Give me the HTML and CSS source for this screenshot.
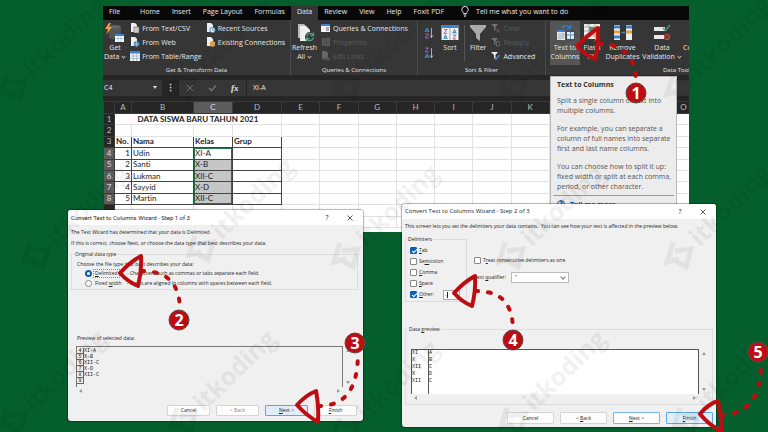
FILE: index.html
```html
<!DOCTYPE html>
<html lang="id">
<head>
    <meta charset="UTF-8">
    <meta name="viewport" content="width=device-width, initial-scale=1.0">
    <title>Text to Columns - itkoding</title>
    <link rel="stylesheet" href="styles.css">
</head>
<body>
<main class="poster">

    <!-- Excel window -->
    <section class="excel">
        <nav class="tabs">
            <a href="#" class="file">File</a>
            <a href="#">Home</a>
            <a href="#">Insert</a>
            <a href="#">Page Layout</a>
            <a href="#">Formulas</a>
            <a href="#" class="active">Data</a>
            <a href="#">Review</a>
            <a href="#">View</a>
            <a href="#">Help</a>
            <a href="#">Foxit PDF</a>
            <a href="#" class="tell"><svg width="8" height="11" viewBox="0 0 8 11"><path d="M2.5 7.5C2.5 6 .8 5.300.8 3.600A3.200 3.200 0 0 1 7.200 3.600C7.200 5.300 5.500 6 5.500 7.500ZM2.700 9H5.300M3.200 10.300H4.800" fill="none" stroke="#ddd"/></svg>Tell me what you want to do</a>
        </nav>

        <div class="ribbon">
            <div class="group get">
                <div class="tools">
                    <button class="big">
                        <svg width="20" height="20" viewBox="0 0 20 20"><ellipse cx="10" cy="4" rx="6" ry="2" fill="#666"/><path d="M4 4V15Q10 18 16 15V4Q10 7 4 4Z" fill="#555"/><path d="M4 0L0 6H3L1 12L7 4H4L6 0Z" fill="#e8a33d"/><rect x="10" y="11" width="9" height="8" fill="#fff"/><rect x="10" y="11" width="9" height="2" fill="#3b83d1"/><path d="M10 15.500H19M13 13V19M16 13V19" stroke="#7aaadd" stroke-width=".6"/></svg>
                        <span>Get<br>Data <i class="caret"></i></span>
                    </button>
                    <div class="list">
                        <button><svg width="10" height="10" viewBox="0 0 10 10"><path d="M1 0H5L7 2V9H1Z" fill="#eee"/><rect x="4" y="4" width="5" height="6" fill="#ccc" stroke="#666" stroke-width=".6"/></svg>From Text/CSV</button>
                        <button><svg width="10" height="10" viewBox="0 0 10 10"><path d="M1 0H5L7 2V9H1Z" fill="#eee"/><circle cx="6.500" cy="7" r="2.800" fill="#3b83c0"/><path d="M4 7H9M6.500 4.500V9.500" stroke="#cde" stroke-width=".6"/></svg>From Web</button>
                        <button><svg width="10" height="10" viewBox="0 0 10 10"><rect width="10" height="10" fill="#f2f2f2"/><rect width="10" height="2.500" fill="#3b83d1"/><path d="M0 5H10M0 7.500H10M3.300 2V10M6.600 2V10" stroke="#8ab" stroke-width=".6"/></svg>From Table/Range</button>
                    </div>
                    <div class="list">
                        <button><svg width="10" height="10" viewBox="0 0 10 10"><path d="M1 0H5L7 2V9H1Z" fill="#eee"/><circle cx="6.500" cy="7" r="2.600" fill="#fff" stroke="#3b83c0"/><path d="M6.500 5.500V7H8" stroke="#345" stroke-width=".6" fill="none"/></svg>Recent Sources</button>
                        <button><svg width="10" height="10" viewBox="0 0 10 10"><path d="M1 0H5L7 2V9H1Z" fill="#eee"/><path d="M4 5Q6.500 3.500 9 5V9Q6.500 10.500 4 9Z" fill="#d8a04a"/></svg>Existing Connections</button>
                    </div>
                </div>
                <div class="caption">Get &amp; Transform Data</div>
            </div>

            <div class="group queries">
                <div class="tools">
                    <button class="big">
                        <svg width="20" height="20" viewBox="0 0 20 20"><path d="M3 1H9L12 4V15H3Z" fill="#bbb"/><path d="M5 3H11L15 7V18H5Z" fill="#f0f0f0"/><circle cx="15" cy="14" r="5" fill="#363636"/><path d="M11.500 13.500A3.600 3.600 0 0 1 18 12M18.500 14.500A3.600 3.600 0 0 1 12 16M18.500 9.500V12.500H15.500M11.500 18.500V15.500H14.500" fill="none" stroke="#4fa583" stroke-width="1.300"/></svg>
                        <span>Refresh<br>All <i class="caret"></i></span>
                    </button>
                    <div class="list">
                        <button><svg width="10" height="10" viewBox="0 0 10 10"><rect y="1" width="9" height="8" fill="#f2f2f2"/><rect y="1" width="9" height="2" fill="#3b83d1"/><rect x="5" y="4" width="3" height="4" fill="#aab"/></svg>Queries &amp; Connections</button>
                        <button disabled><svg width="10" height="10" viewBox="0 0 10 10"><rect x="1" y="1" width="8" height="8" fill="#777"/><path d="M3 1V9M4 3H8M4 5H8M4 7H8" stroke="#444" stroke-width=".7"/></svg>Properties</button>
                        <button disabled><svg width="10" height="10" viewBox="0 0 10 10"><path d="M1 0H5L7 2V8H1Z" fill="#888"/><path d="M2 8H9" stroke="#666" stroke-width="2.500"/></svg>Edit Links</button>
                    </div>
                </div>
                <div class="caption">Queries &amp; Connections</div>
            </div>

            <div class="group sort">
                <div class="tools">
                    <div class="orders">
                        <button aria-label="Sort A to Z"><svg width="10" height="12" viewBox="0 0 10 12"><path d="M1 5L3 1L5 5M1.700 4H4.300" fill="none" stroke="#4b94d8"/><path d="M1.200 7H4.500L1.200 11H4.800" fill="none" stroke="#9a62b8"/><path d="M7.500 1V10.500M5.800 8.500L7.500 10.500L9.200 8.500" fill="none" stroke="#ccc" stroke-width=".8"/></svg></button>
                        <button aria-label="Sort Z to A"><svg width="10" height="12" viewBox="0 0 10 12"><path d="M1 11L3 7L5 11M1.700 10H4.300" fill="none" stroke="#4b94d8"/><path d="M1.200 1H4.500L1.200 5H4.800" fill="none" stroke="#9a62b8"/><path d="M7.500 1V10.500M5.800 8.500L7.500 10.500L9.200 8.500" fill="none" stroke="#ccc" stroke-width=".8"/></svg></button>
                    </div>
                    <button class="big">
                        <svg width="18" height="20" viewBox="0 0 18 20"><rect x=".5" y="2" width="17" height="15" fill="#f0f0f0"/><rect x=".5" y="2" width="17" height="3" fill="#3b83d1"/><path d="M9 5V17" stroke="#888" stroke-width=".7"/><path d="M3 6.500H6L3 10.500H6M12 12H15L12 16H15" fill="none" stroke="#9a62b8"/><path d="M2.800 16L4.500 12L6.200 16M3.300 15H5.700M11.800 10.500L13.500 6.500L15.200 10.500M12.300 9.500H14.700" fill="none" stroke="#2f7cc4"/></svg>
                        <span>Sort</span>
                    </button>
                    <span class="rule"></span>
                    <button class="big">
                        <svg width="16" height="20" viewBox="0 0 16 20"><path d="M0 2H16V4L10 11V18L6 15V11L0 4Z" fill="#aaa"/></svg>
                        <span>Filter</span>
                    </button>
                    <div class="list">
                        <button disabled><svg width="10" height="10" viewBox="0 0 10 10"><path d="M0 1H7L4.500 4V8L3 7V4Z" fill="#999"/><path d="M5 6L8.500 9.500M8.500 6L5 9.500" stroke="#888" stroke-width=".8"/></svg>Clear</button>
                        <button disabled><svg width="10" height="10" viewBox="0 0 10 10"><path d="M0 1H7L4.500 4V8L3 7V4Z" fill="#999"/><path d="M9 4.500H5.500V9H8.500V6" fill="none" stroke="#888"/></svg>Reapply</button>
                        <button><svg width="10" height="10" viewBox="0 0 10 10"><path d="M0 1H7L4.500 4V8L3 7V4Z" fill="#eee"/><path d="M8.500 4L4.500 9" stroke="#3b83d1" stroke-width="1.600"/></svg>Advanced</button>
                    </div>
                </div>
                <div class="caption">Sort &amp; Filter</div>
            </div>

            <div class="group datatools">
                <div class="tools">
                    <button class="big chosen">
                        <svg width="18" height="20" viewBox="0 0 18 20"><rect x="1" y="7" width="8" height="10" fill="#e8eef5"/><rect x="1" y="7" width="8" height="2" fill="#3b83d1"/><path d="M2 11H8M2 13H8M2 15H8" stroke="#9ab"/><rect x="11" y="9" width="7" height="7" fill="#e8eef5"/><path d="M14.500 9V16M11 12H18" stroke="#5b93cc"/><path d="M6 5Q10 0 14 5M14.500 2V5.500H11" fill="none" stroke="#3b83d1" stroke-width="1.300"/></svg>
                        <span>Text to<br>Columns</span>
                    </button>
                    <button class="big flash">
                        <svg width="18" height="20" viewBox="0 0 18 20"><rect x="1" y="1" width="16" height="15" fill="#eee"/><path d="M1 4H17M1 8H17M1 12H17M6 1V16M12 1V16" stroke="#999" stroke-width=".7"/><rect x="6" y="4" width="6" height="4" fill="#4a9a70"/><path d="M15 7L10 14H13L11 19L17 11H14Z" fill="#e8a33d"/></svg>
                        <span>Flash<br>Fill</span>
                    </button>
                    <button class="big remove">
                        <svg width="20" height="20" viewBox="0 0 20 20"><rect x="1" y="2" width="6" height="15" fill="#eee"/><path d="M1 4H7M1 14H7" stroke="#3b83d1" stroke-width="3"/><path d="M1 9H7" stroke="#e8a33d" stroke-width="3"/><path d="M8 9.500H12M10.500 8L12 9.500L10.500 11" fill="none" stroke="#3b83d1"/><rect x="13" y="2" width="6" height="15" fill="#eee"/><path d="M13 4H19" stroke="#3b83d1" stroke-width="3"/><path d="M13 9H19" stroke="#e8a33d" stroke-width="3"/></svg>
                        <span>Remove<br>Duplicates</span>
                    </button>
                    <button class="big valid">
                        <svg width="18" height="20" viewBox="0 0 18 20"><rect x="1" y="4" width="11" height="4" fill="#e8e8e8"/><rect x="1" y="12" width="10" height="4" fill="#e8e8e8"/><path d="M10 5L12.500 7.500L17 2" fill="none" stroke="#3f9c72" stroke-width="1.500"/><circle cx="14" cy="14" r="2.500" fill="none" stroke="#d04a3a" stroke-width="1.200"/><path d="M12.300 12.300L15.700 15.700" stroke="#d04a3a"/></svg>
                        <span>Data<br>Validation <i class="caret"></i></span>
                    </button>
                    <button class="big cut"><svg width="4" height="20" viewBox="0 0 4 20"></svg><span>Co</span></button>
                </div>
                <div class="caption">Data Tools</div>
            </div>
        </div>

        <div class="formula">
            <div class="namebox">C4 <i class="caret solid"></i></div>
            <span class="dots">⋮</span>
            <div class="fx">
                <svg width="8" height="8" viewBox="0 0 8 8"><path d="M1 1L7 7M7 1L1 7" stroke="#777"/></svg>
                <svg width="9" height="8" viewBox="0 0 9 8"><path d="M1 4L3.500 6.500L8 1.500" fill="none" stroke="#777" stroke-width="1.300"/></svg>
                <em>fx</em>
            </div>
            <div class="value">XI-A</div>
        </div>

        <table class="sheet">
            <colgroup><col class="w-head"><col class="w-a"><col class="w-b"><col class="w-c"><col class="w-d"><col span="11" class="w-x"></colgroup>
            <thead>
                <tr><th class="corner"></th><th>A</th><th>B</th><th class="sel">C</th><th>D</th><th>E</th><th>F</th><th>G</th><th>H</th><th>I</th><th>J</th><th>K</th><th>L</th><th>M</th><th>N</th><th>O</th></tr>
            </thead>
            <tbody>
                <tr><th>1</th><td colspan="4" class="title">DATA SISWA BARU TAHUN 2021</td><td></td><td></td><td></td><td></td><td></td><td></td><td></td><td></td><td></td><td></td><td></td></tr>
                <tr><th>2</th><td></td><td></td><td></td><td></td><td></td><td></td><td></td><td></td><td></td><td></td><td></td><td></td><td></td><td></td><td></td></tr>
                <tr class="data names"><th>3</th><td>No.</td><td>Nama</td><td>Kelas</td><td>Grup</td><td></td><td></td><td></td><td></td><td></td><td></td><td></td><td></td><td></td><td></td><td></td></tr>
                <tr class="data"><th class="sel">4</th><td class="num">1</td><td>Udin</td><td class="pick first">XI-A</td><td></td><td></td><td></td><td></td><td></td><td></td><td></td><td></td><td></td><td></td><td></td><td></td></tr>
                <tr class="data"><th class="sel">5</th><td class="num">2</td><td>Santi</td><td class="pick">X-B</td><td></td><td></td><td></td><td></td><td></td><td></td><td></td><td></td><td></td><td></td><td></td><td></td></tr>
                <tr class="data"><th class="sel">6</th><td class="num">3</td><td>Lukman</td><td class="pick">XII-C</td><td></td><td></td><td></td><td></td><td></td><td></td><td></td><td></td><td></td><td></td><td></td><td></td></tr>
                <tr class="data"><th class="sel">7</th><td class="num">4</td><td>Sayyid</td><td class="pick">X-D</td><td></td><td></td><td></td><td></td><td></td><td></td><td></td><td></td><td></td><td></td><td></td><td></td></tr>
                <tr class="data"><th class="sel">8</th><td class="num">5</td><td>Martin</td><td class="pick last">XII-C</td><td></td><td></td><td></td><td></td><td></td><td></td><td></td><td></td><td></td><td></td><td></td><td></td></tr>
                <tr><th>&nbsp;</th><td></td><td></td><td></td><td></td><td></td><td></td><td></td><td></td><td></td><td></td><td></td><td></td><td></td><td></td><td></td></tr>
                <tr><th>&nbsp;</th><td></td><td></td><td></td><td></td><td></td><td></td><td></td><td></td><td></td><td></td><td></td><td></td><td></td><td></td><td></td></tr>
            </tbody>
        </table>
    </section>

    <aside class="tooltip">
        <h2>Text to Columns</h2>
        <p>Split a single column of text into<br>multiple columns.</p>
        <p>For example, you can separate a<br>column of full names into separate<br>first and last name columns.</p>
        <p>You can choose how to split it up:<br>fixed width or split at each comma,<br>period, or other character.</p>
        <a href="#"><b>?</b>Tell me more</a>
    </aside>

    <!-- Wizard step 1 -->
    <section class="dialog step1">
        <header>
            <h2>Convert Text to Columns Wizard - Step 1 of 3</h2>
            <button class="help">?</button>
            <button class="close" aria-label="Close"><svg width="6" height="6" viewBox="0 0 6 6"><path d="M.5 .5L5.500 5.500M5.500 .5L.5 5.500" stroke="#333" stroke-width=".8"/></svg></button>
        </header>
        <div class="body">
            <p>The Text Wizard has determined that your data is Delimited.</p>
            <p>If this is correct, choose Next, or choose the data type that best describes your data.</p>
            <fieldset class="types">
                <legend>Original data type</legend>
                <p>Choose the file type that best describes your data:</p>
                <div class="option"><input type="radio" name="type" id="delimited" checked><label for="delimited" class="focus"><u>D</u>elimited</label><span>- Characters such as commas or tabs separate each field.</span></div>
                <div class="option"><input type="radio" name="type" id="fixed"><label for="fixed">Fixed <u>w</u>idth</label><span>- Fields are aligned in columns with spaces between each field.</span></div>
            </fieldset>
            <p class="heading">Preview of selected data:</p>
            <div class="preview">
                <ol class="lines">
                    <li><b>4</b>XI-A</li>
                    <li><b>5</b>X-B</li>
                    <li><b>6</b>XII-C</li>
                    <li><b>7</b>X-D</li>
                    <li><b>8</b>XII-C</li>
                    <li><b>9</b></li>
                </ol>
                <div class="vscroll"><i class="up"></i><i class="down"></i></div>
                <div class="hscroll"><i class="left"></i><i class="right"></i></div>
            </div>
            <div class="actions">
                <button>Cancel</button>
                <button disabled>&lt; Back</button>
                <button class="primary"><u>N</u>ext &gt;</button>
                <button><u>F</u>inish</button>
            </div>
        </div>
    </section>

    <!-- Wizard step 2 -->
    <section class="dialog step2">
        <header>
            <h2>Convert Text to Columns Wizard - Step 2 of 3</h2>
            <button class="help">?</button>
            <button class="close" aria-label="Close"><svg width="6" height="6" viewBox="0 0 6 6"><path d="M.5 .5L5.500 5.500M5.500 .5L.5 5.500" stroke="#333" stroke-width=".8"/></svg></button>
        </header>
        <div class="body">
            <p>This screen lets you set the delimiters your data contains.&nbsp; You can see how your text is affected in the preview below.</p>
            <div class="settings">
                <fieldset class="delims">
                    <legend>Delimiters</legend>
                    <div class="check"><input type="checkbox" id="tab" checked><label for="tab"><u>T</u>ab</label></div>
                    <div class="check"><input type="checkbox" id="semi"><label for="semi">Se<u>m</u>icolon</label></div>
                    <div class="check"><input type="checkbox" id="comma"><label for="comma"><u>C</u>omma</label></div>
                    <div class="check"><input type="checkbox" id="space"><label for="space"><u>S</u>pace</label></div>
                    <div class="check"><input type="checkbox" id="other" checked><label for="other"><u>O</u>ther:</label><span class="typing"><input type="text" class="char" value="-" aria-label="Other delimiter"></span></div>
                </fieldset>
                <div class="extra">
                    <div class="check"><input type="checkbox" id="treat"><label for="treat">T<u>r</u>eat consecutive delimiters as one</label></div>
                    <div class="qualifier">
                        <label for="qual">Text <u>q</u>ualifier:</label>
                        <span class="combo"><select id="qual"><option>"</option><option>'</option><option>{none}</option></select></span>
                    </div>
                </div>
            </div>
            <fieldset class="datapreview">
                <legend>Data <u>p</u>review</legend>
                <div class="preview">
                    <table class="split">
                        <tr><td>XI</td><td>A</td></tr>
                        <tr><td>X</td><td>B</td></tr>
                        <tr><td>XII</td><td>C</td></tr>
                        <tr><td>X</td><td>D</td></tr>
                        <tr><td>XII</td><td>C</td></tr>
                        <tr class="rest"><td></td><td></td></tr>
                    </table>
                    <div class="vscroll"><i class="up"></i><i class="down"></i></div>
                    <div class="hscroll"><i class="left"></i><i class="right"></i></div>
                </div>
            </fieldset>
            <div class="actions">
                <button>Cancel</button>
                <button>&lt; <u>B</u>ack</button>
                <button class="ring"><u>N</u>ext &gt;</button>
                <button class="primary"><u>F</u>inish</button>
            </div>
        </div>
    </section>

    <!-- itkoding watermark -->
    <svg class="overlay marks" width="768" height="432" viewBox="0 0 768 432" aria-hidden="true">
        <defs>
            <g id="mark">
                <path d="M-5 -14L-11 5L1 2M-3 -6L13 -8L8 10L-2 4" fill="none" stroke="#000" stroke-width="5"/>
                <text x="22" y="8" transform="rotate(-44)">itkoding</text>
            </g>
        </defs>
        <use href="#mark" x="12" y="89"/><use href="#mark" x="180" y="89"/><use href="#mark" x="345" y="89"/><use href="#mark" x="512" y="89"/><use href="#mark" x="678" y="89"/>
        <use href="#mark" x="35" y="257"/><use href="#mark" x="200" y="250"/><use href="#mark" x="345" y="257"/><use href="#mark" x="510" y="257"/><use href="#mark" x="678" y="257"/>
        <use href="#mark" x="12" y="422"/><use href="#mark" x="182" y="422"/><use href="#mark" x="345" y="432"/><use href="#mark" x="512" y="422"/><use href="#mark" x="685" y="422"/>
    </svg>

    <!-- step arrows -->
    <svg class="overlay arrows" width="768" height="432" viewBox="0 0 768 432">
        <path class="head" d="M577 46Q588 35 598 28Q599 44 595 59Q585 55 577 46Z"/>
        <path class="trail" d="M599 44C620 44 636 52 636 84"/>
        <path class="head" d="M120 273Q130 262 141 256Q142 271 138 286Q128 282 120 273Z"/>
        <path class="trail" d="M141 271C163 271 180 279 180 311"/>
        <path class="head" d="M297 405Q306 395 316 391Q319 406 318 422Q307 416 297 405Z"/>
        <path class="trail" d="M318 406C345 406 358 390 358 352"/>
        <path class="head" d="M454 293Q464 282 475 276Q476 291 472 306Q462 302 454 293Z"/>
        <path class="trail" d="M475 291C497 291 513 299 513 331"/>
        <path class="head" d="M700 414Q708 404 718 401Q722 416 721 431Q709 425 700 414Z"/>
        <path class="trail" d="M721 415C748 414 761 398 761 362"/>
        <g class="badge"><circle cx="636" cy="93" r="10"/><text x="636" y="99">1</text></g>
        <g class="badge"><circle cx="179" cy="320" r="10"/><text x="179" y="326">2</text></g>
        <g class="badge"><circle cx="355" cy="343" r="10"/><text x="355" y="349">3</text></g>
        <g class="badge"><circle cx="513" cy="340" r="10"/><text x="513" y="346">4</text></g>
        <g class="badge"><circle cx="758" cy="352" r="10"/><text x="758" y="358">5</text></g>
    </svg>
</main>
</body>
</html>
```
FILE: styles.css
```css
* {
    margin: 0;
    padding: 0;
    box-sizing: border-box;
}

body {
    font-family: "Open Sans", "Noto Sans", sans-serif;
    background-color: #055f2d;
    color: #222;
}

button, input, select {
    font: inherit;
    color: inherit;
    background: none;
    border: none;
    appearance: none;
}

a {
    color: inherit;
    text-decoration: none;
}

.poster {
    position: relative;
    min-height: 100vh;
    overflow: hidden;
}

/* Excel window */
.excel {
    position: absolute;
    left: 103px;
    top: 6px;
    width: 586px;
    height: 226px;
    overflow: hidden;
    background-color: #fff;
    color: #e8e8e8;
    font-size: 7px;
}

.tabs {
    display: flex;
    height: 14px;
    line-height: 11px;
    background-color: #080808;
    white-space: nowrap;
}

.tabs a {
    padding: 0 6px;
}

.tabs .file {
    margin-right: 8px;
}

.tabs .active {
    background-color: #363636;
}

.tabs .tell {
    display: flex;
    gap: 7px;
    padding-left: 11px;
}

.ribbon {
    display: flex;
    height: 55px;
    background-color: #363636;
    white-space: nowrap;
}

.group {
    display: flex;
    flex-direction: column;
    flex-shrink: 0;
    border-right: 1px solid #4c4c4c;
}

.get { width: 188px; }
.queries { width: 127px; }
.sort { width: 128px; }
.datatools { width: 160px; }

.tools {
    display: flex;
    height: 45px;
    gap: 4px;
    padding: 1px 1px 0;
}

.sort .tools {
    gap: 5px;
}

.caption {
    font-size: 6px;
    line-height: 10px;
    text-align: center;
}

.big {
    display: flex;
    flex-direction: column;
    flex-shrink: 0;
    align-items: center;
    line-height: 9px;
    padding-top: 2px;
}

.big svg {
    flex-shrink: 0;
}

.list {
    display: flex;
    flex-direction: column;
}

.list button {
    display: flex;
    align-items: center;
    gap: 2px;
    height: 14px;
}

.list button:disabled {
    color: #5a5a5a;
}

.list button:disabled svg {
    opacity: 0.6;
}

.caret {
    display: inline-block;
    width: 3px;
    height: 3px;
    border-right: 1px solid #bbb;
    border-bottom: 1px solid #bbb;
    transform: rotate(45deg);
    margin: 0 1px 1px;
}

.caret.solid {
    width: 0;
    height: 0;
    border: 2px solid transparent;
    border-top: 3px solid #ddd;
    border-bottom: 0;
    transform: none;
}

.orders {
    display: flex;
    flex-direction: column;
    gap: 6px;
    padding: 6px 2px 0 5px;
}

.rule {
    width: 1px;
    margin: 4px 0;
    background-color: #555;
}

.datatools .tools {
    padding-left: 4px;
    gap: 0;
}

.datatools .caption {
    text-align: left;
    padding-left: 117px;
}

.chosen {
    width: 30px;
    background-color: #555;
}

.flash { width: 24px; }
.remove { width: 37px; }
.valid { width: 42px; }

/* Formula bar */
.formula {
    display: flex;
    height: 26px;
    padding: 5px 0;
    line-height: 16px;
    background-color: #262626;
}

.namebox {
    display: flex;
    align-items: center;
    justify-content: space-between;
    width: 59px;
    padding: 0 4px 0 1px;
    background-color: #363636;
}

.dots {
    width: 17px;
    text-align: center;
    font-size: 9px;
    font-weight: bold;
}

.fx {
    display: flex;
    align-items: center;
    gap: 14px;
    width: 67px;
    padding-left: 7px;
    background-color: #363636;
}

.fx em {
    font: italic bold 9px "Liberation Serif", serif;
}

.value {
    flex: 1;
    margin-left: 1px;
    padding-left: 6px;
    background-color: #363636;
}

/* Worksheet */
.sheet {
    width: 600px;
    height: 127px;
    table-layout: fixed;
    border-collapse: collapse;
    font-family: Lato, "Open Sans", sans-serif;
    font-variant-ligatures: none;
    font-size: 8px;
    line-height: 9px;
    color: #222;
}

.w-head { width: 11px; }
.w-a { width: 17px; }
.w-b { width: 62px; }
.w-c { width: 39px; }
.w-d { width: 49px; }

.sheet th {
    background-color: #262626;
    color: #bbb;
    font-weight: normal;
    border: 1px solid #3a3a3a;
    text-align: center;
}

.sheet thead th {
    height: 12px;
}

.sheet th.sel {
    background-color: #5c5c5c;
    color: #ddd;
}

.sheet td {
    border: 1px solid #e2e2e2;
    padding: 0 1px;
    white-space: nowrap;
    overflow: hidden;
}

.sheet .title {
    text-align: center;
    font-weight: bold;
}

.data td:nth-child(-n+5) {
    border-color: #444;
}

.sheet .names td {
    font-weight: bold;
}

.data .num {
    text-align: right;
}

.sheet .data .pick {
    background-color: #c6c6c6;
    box-shadow: inset 1px 0 #217346, inset -1px 0 #217346;
}

.sheet .data .first {
    background-color: #fff;
    box-shadow: inset 1px 0 #217346, inset -1px 0 #217346, inset 0 1px #217346;
}

.sheet .data .last {
    box-shadow: inset 1px 0 #217346, inset -1px 0 #217346, inset 0 -1px #217346;
}

/* Screen tip */
.tooltip {
    position: absolute;
    left: 550px;
    top: 76px;
    width: 127px;
    height: 130px;
    overflow: hidden;
    padding: 3px 6px;
    background-color: #ececec;
    border: 1px solid #bbb;
    color: #555;
    font-size: 7px;
    line-height: 10px;
    white-space: nowrap;
}

.tooltip h2 {
    font-size: 7px;
    color: #333;
    margin-bottom: 6px;
}

.tooltip p {
    margin-bottom: 8px;
}

.tooltip p:last-of-type {
    margin-bottom: 3px;
}

.tooltip a {
    display: flex;
    gap: 5px;
    margin: 0 -4px;
    padding: 4px;
    border-top: 1px solid #999;
    color: #1f5fa8;
    font-weight: bold;
}

.tooltip a b {
    width: 8px;
    height: 8px;
    line-height: 6px;
    text-align: center;
    border: 1px solid #1f5fa8;
    border-radius: 50%;
}

/* Wizard dialogs */
.dialog {
    position: absolute;
    background-color: #f0f0f0;
    border-radius: 3px;
    box-shadow: 0 0 1px 1px rgba(0, 0, 0, 0.3);
    font-size: 5px;
    line-height: 7px;
    white-space: nowrap;
    overflow: hidden;
}

.step1 {
    left: 68px;
    top: 210px;
    width: 295px;
    height: 211px;
}

.step2 {
    left: 402px;
    top: 204px;
    width: 314px;
    height: 223px;
}

.dialog header {
    display: flex;
    align-items: center;
    height: 15px;
    padding: 0 10px 0 3px;
    background-color: #fff;
}

.dialog h2 {
    flex: 1;
    font-size: 6px;
    font-weight: normal;
}

.step1 h2 {
    font-family: Roboto, "Open Sans", sans-serif;
}

.help {
    font-size: 7px;
    width: 10px;
}

.close {
    width: 6px;
    height: 6px;
    margin-left: 15px;
    line-height: 0;
}

.dialog .body {
    padding: 4px 3px;
}

.dialog fieldset {
    border: 1px solid #dcdcdc;
}

.dialog legend {
    margin-left: -3px;
    padding: 0 1px;
}

.step1 .body > p {
    margin-bottom: 4px;
}

.types {
    width: 287px;
    height: 39px;
    padding: 3px 5px;
}

.option {
    display: flex;
    align-items: center;
    height: 10px;
    padding-left: 8px;
}

.option label {
    width: 32px;
    padding-left: 1px;
}

.option label.focus {
    width: 25px;
    margin-right: 7px;
    outline: 1px dotted #888;
}

.option span {
    padding-left: 1px;
}

.option input {
    width: 7px;
    height: 7px;
    margin-right: 2px;
    background-color: #fff;
    border: 1px solid #888;
    border-radius: 50%;
}

.option input:checked {
    border: 2px solid #0a5fb4;
}

.step1 .body .heading {
    margin: 45px 0 4px 6px;
}

.preview {
    display: grid;
    grid-template-columns: 1fr 9px;
    grid-template-rows: 1fr 7px;
    font-family: "Liberation Mono", monospace;
}

.step1 .preview {
    height: 48px;
    margin: 0 8px 0 5px;
}

.lines {
    list-style: none;
    border: 1px solid #777;
    border-bottom: 0;
    padding-top: 1px;
    line-height: 6px;
    overflow: hidden;
}

.lines li {
    height: 6px;
}

.lines b {
    display: inline-block;
    width: 7px;
    height: 6px;
    text-align: center;
    font-weight: normal;
    border-right: 1px solid #666;
    border-bottom: 1px solid #666;
}

.vscroll, .hscroll {
    display: flex;
    align-items: center;
    justify-content: space-between;
    padding: 3px;
}

.vscroll {
    flex-direction: column;
}

.preview i {
    width: 0;
    height: 0;
    border: 2px solid transparent;
}

.preview .up { border-top: 0; border-bottom: 3px solid #999; }
.preview .down { border-bottom: 0; border-top: 3px solid #999; }
.preview .left { border-left: 0; border-right: 3px solid #999; }
.preview .right { border-right: 0; border-left: 3px solid #999; }

.actions {
    display: flex;
    justify-content: flex-end;
    gap: 6px;
}

.actions button {
    width: 43px;
    height: 11px;
    background-color: #fdfdfd;
    border: 1px solid #d4d4d4;
    border-radius: 1px;
}

.actions button:disabled {
    color: #888;
}

.actions .ring {
    border-color: #7ab5e8;
}

.actions .primary {
    background-color: #e0eef9;
    border-color: #5aa6e6;
}

.step1 .actions {
    padding: 11px 3px 0;
}

.settings {
    display: flex;
    gap: 7px;
    margin-top: 6px;
}

.delims {
    width: 62px;
    height: 66px;
    padding: 2px 4px;
}

.check {
    display: flex;
    align-items: center;
    gap: 2px;
    height: 11px;
}

.check input[type="checkbox"] {
    position: relative;
    width: 7px;
    height: 7px;
    background-color: #fff;
    border: 1px solid #888;
    border-radius: 1px;
}

.check input[type="checkbox"]:checked {
    background-color: #0a5fb4;
    border-color: #0a5fb4;
}

.check input[type="checkbox"]:checked::after {
    content: "";
    position: absolute;
    left: 1px;
    top: 1px;
    width: 4px;
    height: 2px;
    border-left: 1px solid #fff;
    border-bottom: 1px solid #fff;
    transform: rotate(-45deg);
}

.typing {
    position: relative;
    margin-left: 7px;
}

.typing::after {
    content: "";
    position: absolute;
    left: 4px;
    top: 2px;
    width: 1px;
    height: 6px;
    background-color: #222;
}

.char {
    display: block;
    width: 17px;
    height: 10px;
    padding-left: 1px;
    background-color: #fff;
    border: 1px solid #aaa;
}

.extra {
    padding-top: 19px;
}

.qualifier {
    display: flex;
    align-items: center;
    gap: 5px;
    height: 23px;
}

.combo {
    position: relative;
}

.combo select {
    display: block;
    width: 58px;
    height: 11px;
    padding-left: 3px;
    background-color: #fff;
    border: 1px solid #bbb;
}

.combo::after {
    content: "";
    position: absolute;
    right: 4px;
    top: 3px;
    width: 3px;
    height: 3px;
    border-right: 1px solid #777;
    border-bottom: 1px solid #777;
    transform: rotate(45deg);
}

.datapreview {
    height: 79px;
    margin-top: 24px;
    padding: 16px 4px 0 5px;
}

.datapreview .preview {
    height: 52px;
}

.split {
    width: 100%;
    height: 45px;
    background-color: #fff;
    border: 1px solid #555;
    border-bottom: 0;
    border-collapse: collapse;
    table-layout: fixed;
    font-size: 5px;
    line-height: 7px;
}

.split td {
    height: 7px;
}

.split .rest td {
    height: auto;
}

.split td:first-child {
    width: 17px;
    border-right: 1px solid #555;
}

.step2 .actions {
    padding-top: 7px;
}

.step2 .actions button {
    width: 47px;
    height: 12px;
}

/* Annotations */
.overlay {
    position: absolute;
    left: 0;
    top: 0;
    pointer-events: none;
}

.marks {
    opacity: 0.05;
}

.marks text {
    font: bold 25px "Open Sans", sans-serif;
}

.head {
    fill: none;
    stroke: #bd0d12;
    stroke-width: 4;
    stroke-linejoin: round;
}

.trail {
    fill: none;
    stroke: #bd0d12;
    stroke-width: 4;
    stroke-linecap: round;
    stroke-dasharray: 3 10;
}

.badge circle {
    fill: #bd0d12;
    stroke: #5a4a4a;
    stroke-width: 1;
}

.badge text {
    font: bold 16px "Open Sans", sans-serif;
    fill: #fff;
    text-anchor: middle;
}
```
